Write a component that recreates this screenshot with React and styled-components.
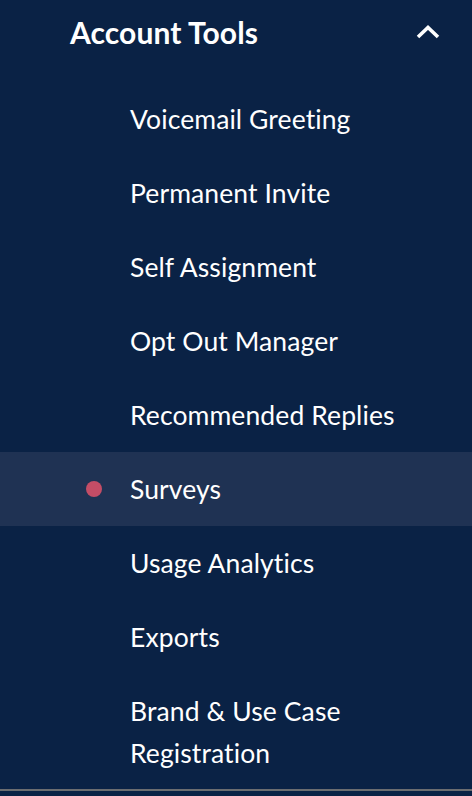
import React from 'react';
import styled, {createGlobalStyle} from "styled-components";

const items = [
    "Voicemail Greeting",
    "Permanent Invite",
    "Self Assignment",
    "Opt Out Manager",
    "Recommended Replies",
    "Surveys",
    "Usage Analytics",
    "Exports",
    "Brand & Use Case Registration",
];

const App = () => {
    return (
        <>
            <GlobalStyle/>
            <Sidebar>
                <Header>
                    <Title>Account Tools</Title>
                    <Chevron viewBox="0 0 24 14">
                        <path d="M2 12 L12 2.5 L22 12" fill="none" stroke="#fff" strokeWidth="3.6"/>
                    </Chevron>
                </Header>
                <List>
                    {items.map(name => (
                        <Item key={name} active={name === "Surveys"} wrapped={name.length > 22}>
                            {name === "Surveys" && <Dot/>}
                            <Label>{name}</Label>
                        </Item>
                    ))}
                </List>
                <Divider/>
            </Sidebar>
        </>
    );
};

const GlobalStyle = createGlobalStyle`
  body {
    margin: 0;
    background: #0a2245;
    font-family: "Lato", "Open Sans", sans-serif;
  }
`;

const Sidebar = styled.nav`
  width: 472px;
  height: 796px;
  background: #0a2245;
  display: flex;
  flex-direction: column;
  overflow: hidden;
`;

const Header = styled.div`
  height: 63px;
  display: flex;
  align-items: center;
  justify-content: space-between;
  padding: 0 32px 0 70px;
  box-sizing: border-box;
`;

const Title = styled.h2`
  margin: 0;
  color: #fff;
  font-size: 30px;
  font-weight: 700;
  letter-spacing: 0.1px;
`;

const Chevron = styled.svg`
  width: 24px;
  height: 14px;
  margin-top: 1px;
`;

const List = styled.ul`
  list-style: none;
  margin: 19px 0 0;
  padding: 0;
`;

const Item = styled.li`
  position: relative;
  height: ${p => p.wrapped ? "auto" : "74px"};
  padding: ${p => p.wrapped ? "16px 60px 15px 130px" : "0 20px 0 130px"};
  display: flex;
  align-items: center;
  background: ${p => p.active ? "#1f3253" : "transparent"};
  color: #fff;
`;

const Label = styled.span`
  font-size: 26.5px;
  line-height: 42px;
  letter-spacing: 0.1px;
`;

const Dot = styled.span`
  position: absolute;
  left: 86px;
  top: 50%;
  width: 16px;
  height: 16px;
  margin-top: -8px;
  border-radius: 50%;
  background: #c44d66;
`;

const Divider = styled.hr`
  margin: 0;
  border: none;
  height: 2px;
  background: #6b6d70;
`;

export default App;
